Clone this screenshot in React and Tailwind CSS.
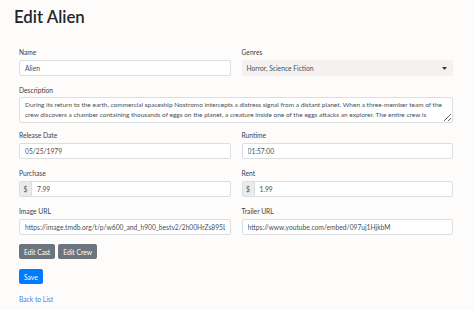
import React from 'react';

const label = 'block h-[10px] leading-[10px] text-[6.7px] text-[#3d4246]';
const input =
  'block w-full h-[16px] px-[5px] rounded-[2px] border border-[#dcdfe2] bg-white text-[6.7px] leading-[14px] text-[#495057] outline-none';

function Field({ name, children, className = '' }) {
  return (
    <div className={className}>
      <label className={label}>{name}</label>
      <div className="mt-[3px]">{children}</div>
    </div>
  );
}

function Money({ value }) {
  return (
    <div className="flex h-[16px] rounded-[2px] border border-[#dcdfe2] bg-white text-[6.7px] text-[#495057]">
      <span className="w-[12px] flex items-center justify-center bg-[#e9ecef] border-r border-[#dcdfe2]">$</span>
      <input className="flex-1 min-w-0 px-[5px] outline-none bg-transparent" defaultValue={value} />
    </div>
  );
}

export default function App() {
  const plot = [
    'During its return to the earth, commercial spaceship Nostromo intercepts a distress signal from a distant planet. When a three-member team of the',
    'crew discovers a chamber containing thousands of eggs on the planet, a creature inside one of the eggs attacks an explorer. The entire crew is',
    'in grave danger as the alien grows and hunts them one by one.',
  ].join('\n');

  return (
    <div className="min-h-screen bg-[#fdfcfb] text-[#212529] leading-[10px]" style={{ fontFamily: 'Lato, "Open Sans", sans-serif' }}>
      <h1 className="pl-[14px] pt-[5px] text-[16.8px] leading-[24px] font-semibold text-[#212529]">Edit Alien</h1>

      <form className="ml-[19px] w-[434px] mt-[18px]">
        <div className="grid grid-cols-2 gap-x-[11px]">
          <Field name="Name">
            <input className={input} defaultValue="Alien" />
          </Field>
          <Field name="Genres">
            <div className="flex items-center justify-between h-[16px] px-[5px] rounded-[2px] bg-[#f3f2f1] text-[6.7px] text-[#495057]">
              <span>Horror, Science Fiction</span>
              <svg width="5" height="3" viewBox="0 0 5 3" className="mr-[1px]">
                <path d="M0 0h5L2.5 3z" fill="#343a40" />
              </svg>
            </div>
          </Field>
        </div>

        <div className="mt-[9px]">
          <label className={label}>Description</label>
          <textarea
            wrap="off"
            className="mt-[2px] block w-full h-[26px] px-[5px] py-[2px] rounded-[2px] border border-[#dcdfe2] bg-white text-[6.5px] leading-[10px] text-[#495057] outline-none overflow-hidden"
            defaultValue={plot}
          />
        </div>

        <div className="grid grid-cols-2 gap-x-[11px] mt-[7px]">
          <Field name="Release Date">
            <input className={input} defaultValue="05/25/1979" />
          </Field>
          <Field name="Runtime">
            <input className={input} defaultValue="01:57:00" />
          </Field>
          <Field name="Purchase" className="mt-[9px]">
            <Money value="7.99" />
          </Field>
          <Field name="Rent" className="mt-[9px]">
            <Money value="1.99" />
          </Field>
          <Field name="Image URL" className="mt-[9px]">
            <input className={input} defaultValue="https://image.tmdb.org/t/p/w600_and_h900_bestv2/2h00HrZs895L3tXl0vMCd6T5eK.jpg" />
          </Field>
          <Field name="Trailer URL" className="mt-[9px]">
            <input className={input} defaultValue="https://www.youtube.com/embed/097uj1HjkbM" />
          </Field>
        </div>

        <div className="flex gap-[3px] mt-[9px]">
          <button type="button" className="h-[15px] px-[5px] rounded-[2px] bg-[#6c757d] text-white text-[6.7px]">Edit Cast</button>
          <button type="button" className="h-[15px] px-[5px] rounded-[2px] bg-[#6c757d] text-white text-[6.7px]">Edit Crew</button>
        </div>

        <div className="flex mt-[10px]">
          <button type="button" className="h-[15px] px-[5px] rounded-[2px] bg-[#007bff] text-white text-[6.7px]">Save</button>
        </div>

        <div className="flex mt-[10px] h-[10px] items-center">
          <a href="#" className="text-[6.7px] leading-[10px] text-[#3a86ee]">Back to List</a>
        </div>
      </form>
    </div>
  );
}
